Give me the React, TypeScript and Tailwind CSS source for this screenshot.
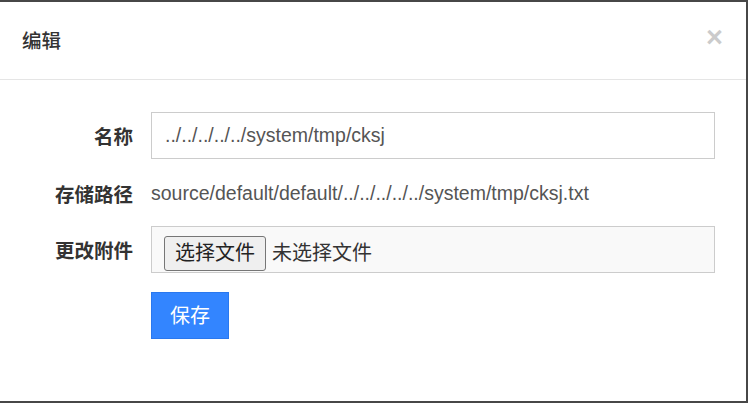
import React from 'react';

const font = "font-['Liberation_Sans','Noto_Sans_CJK_SC',sans-serif]";

function Row({ label, children, className = '' }: { label: string; children: React.ReactNode; className?: string }) {
  return (
    <div className={`flex items-center h-[47px] ${className}`}>
      <div className="w-[133px] shrink-0 text-right pt-[2px] text-[19.5px] leading-[24px] font-bold text-[#333]">
        {label}
      </div>
      <div className="ml-[18px] w-[564px] h-full flex items-center">{children}</div>
    </div>
  );
}

export default function App() {
  return (
    <div
      className={`w-[748px] h-[403px] bg-white border-t-2 border-r-2 border-b-2 border-[#474747] flex flex-col ${font}`}
    >
      {/* header */}
      <div className="h-[78px] shrink-0 border-b border-[#e5e5e5] flex items-center justify-between pl-[22px] pr-[23px]">
        <h4 className="text-[19.5px] leading-[26px] font-medium text-[#333]">编辑</h4>
        <span className="text-[29px] leading-none font-bold text-black opacity-20 -mt-[7px] font-['Liberation_Sans',sans-serif]">
          ×
        </span>
      </div>

      {/* body */}
      <div className="pt-[32px]">
        <Row label="名称">
          <div className="w-full h-full border border-[#ccc] bg-white flex items-center pl-[13px] text-[19.5px] text-[#555]">
            ../../../../../system/tmp/cksj
          </div>
        </Row>

        <Row label="存储路径" className="mt-[11px]">
          <span className="text-[19.5px] text-[#555]">
            source/default/default/../../../../../system/tmp/cksj.txt
          </span>
        </Row>

        <Row label="更改附件" className="mt-[9px]">
          <div className="w-full h-full border border-[#ccc] bg-[#f9f9f9] flex items-center pl-[12px]">
            <span className="h-[35px] mt-[7px] px-[10px] flex items-center bg-[#efefef] border border-[#767676] rounded-[3px] text-[20px] text-[#222]">
              选择文件
            </span>
            <span className="ml-[6px] mt-[7px] text-[20px] text-[#333]">未选择文件</span>
          </div>
        </Row>

        <div className="mt-[19px] ml-[151px]">
          <button className="w-[78px] h-[47px] bg-[#3385ff] border border-[#2a78ee] text-white text-[20px] leading-none">
            保存
          </button>
        </div>
      </div>
    </div>
  );
}
